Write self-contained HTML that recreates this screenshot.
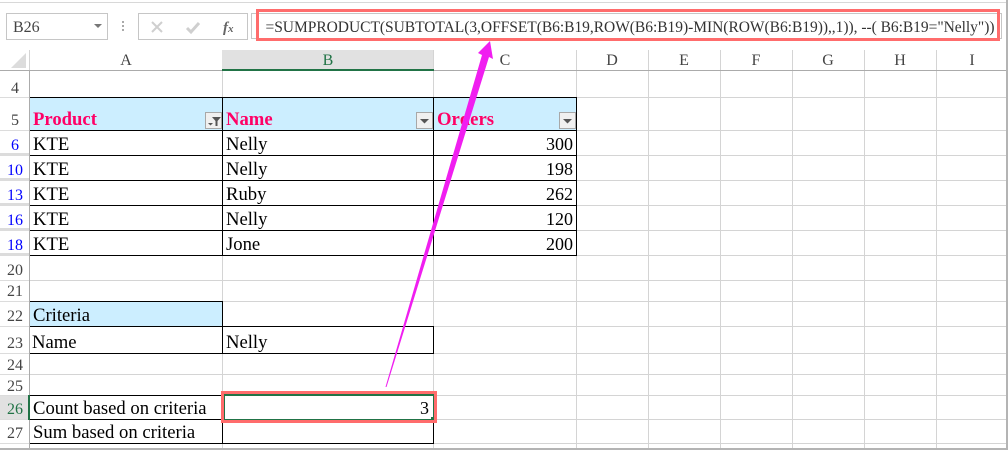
<!DOCTYPE html>
<html><head><meta charset="utf-8"><style>
html,body{margin:0;padding:0;background:#fff;width:1008px;height:450px;overflow:hidden}
svg{display:block}
text{font-family:"Liberation Serif",serif}
.c{font-size:18.67px;fill:#000}
.n{font-size:18px;fill:#000;text-anchor:end}
.h{font-size:18.67px;fill:#ff0066;font-weight:bold}
.ch{font-size:16px;fill:#444;text-anchor:middle}
.rh{font-size:16px;fill:#444;text-anchor:middle}
.rb{font-size:16px;fill:#0000ff;text-anchor:middle}
</style></head><body>
<svg width="1008" height="450" viewBox="0 0 1008 450" xmlns="http://www.w3.org/2000/svg" shape-rendering="crispEdges">
<rect width="1008" height="450" fill="#fff"/>
<rect x="0" y="2" width="1006" height="1" fill="#d8d8d8"/>
<!-- name box -->
<rect x="6.5" y="13.5" width="101" height="26" fill="#fff" stroke="#c6c6c6"/>
<text x="13" y="32" font-size="16" fill="#444">B26</text>
<path d="M94 24h8l-4 4z" fill="#777" shape-rendering="auto"/>
<rect x="122" y="21" width="2" height="2" fill="#aaa"/><rect x="122" y="25" width="2" height="2" fill="#aaa"/><rect x="122" y="29" width="2" height="2" fill="#aaa"/>
<!-- fx box -->
<rect x="138.5" y="13.5" width="109" height="26" fill="#fff" stroke="#c6c6c6"/>
<path d="M152 22l10 10M162 22l-10 10" stroke="#cfcfcf" stroke-width="2" fill="none" shape-rendering="auto"/>
<path d="M187 28l4 4 8-9" stroke="#cfcfcf" stroke-width="3" fill="none" shape-rendering="auto"/>
<text x="223" y="32" font-size="15" font-style="italic" font-weight="bold" fill="#666">f<tspan font-size="11" dy="0">x</tspan></text>
<!-- formula box -->
<rect x="251.5" y="13.5" width="750" height="25" fill="#fff" stroke="#c6c6c6"/>
<text x="265.500" y="32" font-size="15.500" fill="#333" textLength="729" lengthAdjust="spacing">=SUMPRODUCT(SUBTOTAL(3,OFFSET(B6:B19,ROW(B6:B19)-MIN(ROW(B6:B19)),,1)), --( B6:B19="Nelly"))</text>
<rect x="257.5" y="10.5" width="741" height="29" fill="none" stroke="#ff6c6c" stroke-width="3"/>

<!-- column header -->
<rect x="222" y="50" width="212" height="20" fill="#e1e1e1"/>
<rect x="222" y="69" width="212" height="2" fill="#217346"/>
<path d="M26 53v15H11z" fill="#dcdcdc" shape-rendering="auto"/>
<g fill="#d4d4d4">
<rect x="29" y="50" width="1" height="20"/><rect x="576" y="50" width="1" height="20"/><rect x="648" y="50" width="1" height="20"/><rect x="720" y="50" width="1" height="20"/><rect x="792" y="50" width="1" height="20"/><rect x="864" y="50" width="1" height="20"/><rect x="936" y="50" width="1" height="20"/>
<rect x="433" y="50" width="1" height="19"/>
</g>
<rect x="0" y="70" width="222" height="1" fill="#ababab"/>
<rect x="434" y="70" width="572" height="1" fill="#ababab"/>
<text class="ch" x="126" y="65">A</text>
<text class="ch" x="328" y="65" style="fill:#217346">B</text>
<text class="ch" x="505" y="65">C</text>
<text class="ch" x="612" y="65">D</text>
<text class="ch" x="684" y="65">E</text>
<text class="ch" x="756" y="65">F</text>
<text class="ch" x="828" y="65">G</text>
<text class="ch" x="900" y="65">H</text>
<text class="ch" x="972" y="65">I</text>

<!-- grid -->
<g fill="#d4d4d4">
<rect x="222" y="71" width="1" height="377"/><rect x="433" y="71" width="1" height="377"/><rect x="576" y="71" width="1" height="377"/><rect x="648" y="71" width="1" height="377"/><rect x="720" y="71" width="1" height="377"/><rect x="792" y="71" width="1" height="377"/><rect x="864" y="71" width="1" height="377"/><rect x="936" y="71" width="1" height="377"/>
<rect x="30" y="97" width="976" height="1"/><rect x="30" y="130" width="976" height="1"/><rect x="30" y="155" width="976" height="1"/><rect x="30" y="180" width="976" height="1"/><rect x="30" y="205" width="976" height="1"/><rect x="30" y="230" width="976" height="1"/><rect x="30" y="255" width="976" height="1"/><rect x="30" y="280" width="976" height="1"/><rect x="30" y="301" width="976" height="1"/><rect x="30" y="326" width="976" height="1"/><rect x="30" y="353" width="976" height="1"/><rect x="30" y="374" width="976" height="1"/><rect x="30" y="395" width="976" height="1"/><rect x="30" y="419" width="976" height="1"/><rect x="30" y="443" width="976" height="1"/>
</g>
<!-- row header -->
<rect x="0" y="395" width="29" height="25" fill="#e1e1e1"/>
<g fill="#dcdcdc">
<rect x="0" y="97" width="29" height="1"/><rect x="0" y="130" width="29" height="1"/><rect x="0" y="153" width="29" height="3"/><rect x="0" y="178" width="29" height="3"/><rect x="0" y="203" width="29" height="3"/><rect x="0" y="228" width="29" height="3"/><rect x="0" y="253" width="29" height="3"/><rect x="0" y="280" width="29" height="1"/><rect x="0" y="301" width="29" height="1"/><rect x="0" y="326" width="29" height="1"/><rect x="0" y="353" width="29" height="1"/><rect x="0" y="374" width="29" height="1"/><rect x="0" y="395" width="29" height="1"/><rect x="0" y="419" width="29" height="1"/><rect x="0" y="443" width="29" height="1"/>
</g>
<rect x="29" y="70" width="1" height="378" fill="#ababab"/>
<rect x="28" y="395" width="2" height="25" fill="#217346"/>
<text class="rh" x="15" y="93">4</text>
<text class="rh" x="15" y="125">5</text>
<text class="rb" x="15" y="150">6</text>
<text class="rb" x="15" y="175">10</text>
<text class="rb" x="15" y="200">13</text>
<text class="rb" x="15" y="225">16</text>
<text class="rb" x="15" y="250">18</text>
<text class="rh" x="15" y="275">20</text>
<text class="rh" x="15" y="296">21</text>
<text class="rh" x="15" y="321">22</text>
<text class="rh" x="15" y="348">23</text>
<text class="rh" x="15" y="370">24</text>
<text class="rh" x="15" y="391">25</text>
<text class="rh" x="15" y="414" style="fill:#217346">26</text>
<text class="rh" x="15" y="438">27</text>

<!-- fills -->
<rect x="30" y="98" width="546" height="32" fill="#cceeff"/>
<rect x="30" y="302" width="192" height="24" fill="#cceeff"/>
<!-- black borders -->
<g fill="#000">
<rect x="30" y="97" width="547" height="1"/><rect x="30" y="130" width="547" height="1"/><rect x="30" y="155" width="547" height="1"/><rect x="30" y="180" width="547" height="1"/><rect x="30" y="205" width="547" height="1"/><rect x="30" y="230" width="547" height="1"/><rect x="30" y="255" width="547" height="1"/>
<rect x="222" y="97" width="1" height="158"/><rect x="433" y="97" width="1" height="158"/><rect x="576" y="97" width="1" height="159"/>
<rect x="30" y="301" width="193" height="1"/><rect x="30" y="326" width="404" height="1"/><rect x="30" y="353" width="404" height="1"/>
<rect x="222" y="301" width="1" height="52"/><rect x="433" y="326" width="1" height="27"/>
<rect x="30" y="395" width="192" height="1"/><rect x="30" y="419" width="192" height="1"/><rect x="30" y="443" width="404" height="1"/>
<rect x="222" y="395" width="1" height="49"/><rect x="433" y="420" width="1" height="24"/>
</g>

<!-- text -->
<text class="h" x="33" y="125">Product</text>
<text class="h" x="226" y="125">Name</text>
<text class="h" x="437" y="125">Orders</text>
<text class="c" x="33" y="150">KTE</text><text class="c" x="226" y="150">Nelly</text><text class="n" x="573" y="150">300</text>
<text class="c" x="33" y="175">KTE</text><text class="c" x="226" y="175">Nelly</text><text class="n" x="573" y="175">198</text>
<text class="c" x="33" y="200">KTE</text><text class="c" x="226" y="200">Ruby</text><text class="n" x="573" y="200">262</text>
<text class="c" x="33" y="225">KTE</text><text class="c" x="226" y="225">Nelly</text><text class="n" x="573" y="225">120</text>
<text class="c" x="33" y="250">KTE</text><text class="c" x="226" y="250">Jone</text><text class="n" x="573" y="250">200</text>
<text class="c" x="33" y="321">Criteria</text>
<text class="c" x="32" y="348">Name</text><text class="c" x="226" y="348">Nelly</text>
<text class="c" x="33" y="414">Count based on criteria</text>
<text class="c" x="33" y="438">Sum based on criteria</text>
<text class="n" x="429" y="414">3</text>

<!-- filter buttons -->
<g>
<rect x="205.5" y="112.5" width="16" height="16" fill="#f0f0f0" stroke="#a8a8a8"/>
<path d="M212 117h9l-3.5 4v5h-2v-5z" fill="#555" shape-rendering="auto"/>
<path d="M208 123h5l-2.5 2.500z" fill="#555" shape-rendering="auto"/>
<rect x="416.500" y="112.500" width="16" height="16" fill="#f0f0f0" stroke="#a8a8a8"/>
<path d="M420 119h9l-4.500 4.500z" fill="#555" shape-rendering="auto"/>
<rect x="559.500" y="112.500" width="16" height="16" fill="#f0f0f0" stroke="#a8a8a8"/>
<path d="M563 119h9l-4.500 4.500z" fill="#555" shape-rendering="auto"/>
</g>

<!-- selected cell -->
<rect x="224" y="394" width="210" height="2" fill="#217346"/>
<rect x="224" y="394" width="1" height="26" fill="#217346"/>
<rect x="433" y="394" width="1" height="26" fill="#217346"/>
<rect x="224" y="419" width="210" height="1" fill="#217346"/>
<rect x="431" y="417" width="3" height="3" fill="#217346"/>
<rect x="222.500" y="392.500" width="213" height="29" fill="none" stroke="#ff6c6c" stroke-width="3"/>

<!-- arrow -->
<path d="M385.500 387L482 55L478 53L490 41L493 59L489 57L386.500 387Z" fill="#f01ef0" shape-rendering="auto"/>

<!-- window edge -->
<rect x="1006" y="0" width="2" height="450" fill="#b4b4b4"/>
<rect x="0" y="448" width="1008" height="2" fill="#b4b4b4"/>
</svg>
</body></html>
